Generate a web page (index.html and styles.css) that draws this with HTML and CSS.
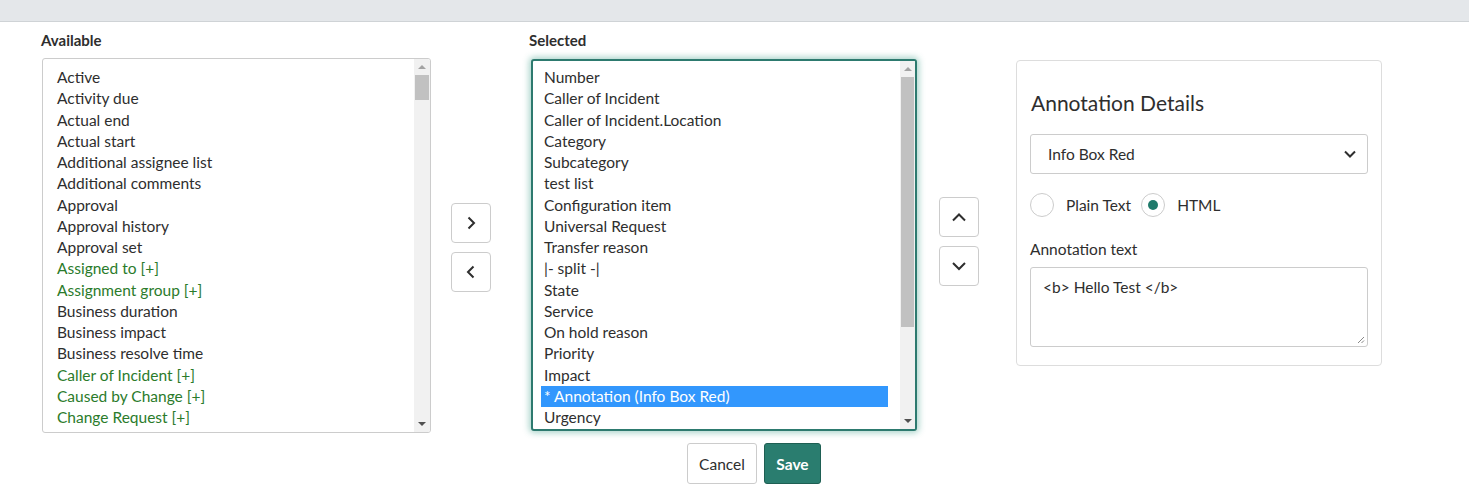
FILE: index.html
```html
<!DOCTYPE html>
<html lang="en">
<head>
    <meta charset="UTF-8">
    <meta name="viewport" content="width=device-width, initial-scale=1.0">
    <title>Edit Columns</title>
    <link rel="stylesheet" href="styles.css">
</head>
<body>
    <div class="topbar"></div>

    <div class="main">
        <div class="col col-available">
            <div class="col-label">Available</div>
            <div class="listbox">
                <div class="list-items">
                    <div class="item">Active</div>
                    <div class="item">Activity due</div>
                    <div class="item">Actual end</div>
                    <div class="item">Actual start</div>
                    <div class="item">Additional assignee list</div>
                    <div class="item">Additional comments</div>
                    <div class="item">Approval</div>
                    <div class="item">Approval history</div>
                    <div class="item">Approval set</div>
                    <div class="item ref">Assigned to [+]</div>
                    <div class="item ref">Assignment group [+]</div>
                    <div class="item">Business duration</div>
                    <div class="item">Business impact</div>
                    <div class="item">Business resolve time</div>
                    <div class="item ref">Caller of Incident [+]</div>
                    <div class="item ref">Caused by Change [+]</div>
                    <div class="item ref">Change Request [+]</div>
                </div>
                <div class="scrollbar">
                    <span class="arrow up"></span>
                    <div class="track"><div class="thumb thumb-small"></div></div>
                    <span class="arrow down"></span>
                </div>
            </div>
        </div>

        <div class="move-buttons move-lr">
            <button class="icon-btn" type="button" title="Add">
                <svg width="14" height="14" viewBox="0 0 14 14"><path d="M4.5 1.5 L10 7 L4.5 12.5" fill="none" stroke="#2e2e2e" stroke-width="2"/></svg>
            </button>
            <button class="icon-btn" type="button" title="Remove">
                <svg width="14" height="14" viewBox="0 0 14 14"><path d="M9.5 1.5 L4 7 L9.5 12.5" fill="none" stroke="#2e2e2e" stroke-width="2"/></svg>
            </button>
        </div>

        <div class="col col-selected">
            <div class="col-label">Selected</div>
            <div class="listbox listbox-focus">
                <div class="list-items">
                    <div class="item">Number</div>
                    <div class="item">Caller of Incident</div>
                    <div class="item">Caller of Incident.Location</div>
                    <div class="item">Category</div>
                    <div class="item">Subcategory</div>
                    <div class="item">test list</div>
                    <div class="item">Configuration item</div>
                    <div class="item">Universal Request</div>
                    <div class="item">Transfer reason</div>
                    <div class="item">|- split -|</div>
                    <div class="item">State</div>
                    <div class="item">Service</div>
                    <div class="item">On hold reason</div>
                    <div class="item">Priority</div>
                    <div class="item">Impact</div>
                    <div class="item selected">* Annotation (Info Box Red)</div>
                    <div class="item">Urgency</div>
                </div>
                <div class="scrollbar">
                    <span class="arrow up"></span>
                    <div class="track"><div class="thumb thumb-large"></div></div>
                    <span class="arrow down"></span>
                </div>
            </div>
            <div class="actions">
                <button class="btn btn-cancel" type="button">Cancel</button>
                <button class="btn btn-primary" type="button">Save</button>
            </div>
        </div>

        <div class="move-buttons move-ud">
            <button class="icon-btn" type="button" title="Move up">
                <svg width="16" height="14" viewBox="0 0 16 14"><path d="M2 10.5 L8 4.5 L14 10.5" fill="none" stroke="#2e2e2e" stroke-width="2"/></svg>
            </button>
            <button class="icon-btn" type="button" title="Move down">
                <svg width="16" height="14" viewBox="0 0 16 14"><path d="M2 4 L8 10 L14 4" fill="none" stroke="#2e2e2e" stroke-width="2"/></svg>
            </button>
        </div>

        <div class="panel">
            <h3 class="panel-title">Annotation Details</h3>
            <div class="select">
                <span>Info Box Red</span>
                <svg width="14" height="10" viewBox="0 0 14 10"><path d="M2 2.5 L7 7.5 L12 2.5" fill="none" stroke="#2e2e2e" stroke-width="2"/></svg>
            </div>
            <div class="radio-row">
                <span class="radio"></span>
                <span class="radio-label">Plain Text</span>
                <span class="radio checked"><span class="dot"></span></span>
                <span class="radio-label">HTML</span>
            </div>
            <div class="field-label">Annotation text</div>
            <div class="textarea">
                &lt;b&gt; Hello Test &lt;/b&gt;
                <svg class="resize" width="8" height="8" viewBox="0 0 8 8"><path d="M7 1 L1 7 M7 4.5 L4.5 7" stroke="#888" stroke-width="1"/></svg>
            </div>
        </div>
    </div>
</body>
</html>
```

FILE: styles.css
```css
body {
    margin: 0;
    font-family: "Lato", "Liberation Sans", sans-serif;
    font-size: 15.5px;
    color: #2e2e2e;
    background-color: #fff;
}

.topbar {
    height: 21px;
    background-color: #e4e7ea;
    border-bottom: 1px solid #cfd3d6;
}

.main {
    display: flex;
    align-items: flex-start;
    padding: 8px 0 0 41px;
}

.col-label {
    font-weight: bold;
    font-size: 15px;
    line-height: 20px;
    height: 20px;
}

/* list boxes */
.listbox {
    display: flex;
    border: 1px solid #cccccc;
    border-radius: 3px;
    background-color: #fff;
    overflow: hidden;
}

.col-available .listbox {
    width: 387px;
    height: 373px;
    margin: 8px 0 0 1px;
}

.col-available .list-items {
    padding: 8px 0 0 11px;
}

.list-items {
    flex: 1;
    overflow: hidden;
}

.item {
    line-height: 21.25px;
    height: 21.25px;
    padding: 0 3px;
    white-space: nowrap;
}

.item.ref {
    color: #2b7b2b;
}

.item.selected {
    background-color: #3297fd;
    color: #fff;
}

.listbox-focus {
    width: 382px;
    height: 368px;
    margin: 9px 0 0 2px;
    border: 2px solid #2d7a6f;
    box-shadow: 0 0 6px 2px rgba(67, 160, 140, 0.45);
}

.listbox-focus .list-items {
    padding: 6px 12px 0 8px;
}

.scrollbar {
    width: 16px;
    display: flex;
    flex-direction: column;
    align-items: center;
    background-color: #f1f1f1;
}

.listbox-focus .scrollbar {
    width: 15px;
}

.arrow {
    width: 0;
    height: 0;
    margin: 6px 0;
    border-left: 4px solid transparent;
    border-right: 4px solid transparent;
}

.arrow.up {
    border-bottom: 4px solid #a3a3a3;
}

.arrow.down {
    border-top: 4px solid #505050;
}

.track {
    flex: 1;
    width: 100%;
}

.thumb {
    background-color: #c1c1c1;
    margin: 0 1px;
}

.thumb-small {
    height: 25px;
}

.thumb-large {
    height: 250px;
}

/* move buttons */
.move-buttons {
    display: flex;
    flex-direction: column;
    gap: 9px;
}

.move-lr {
    margin-left: 20px;
    padding-top: 173px;
}

.move-ud {
    margin-left: 22px;
    padding-top: 167px;
}

.icon-btn {
    width: 40px;
    height: 40px;
    padding: 0;
    display: flex;
    align-items: center;
    justify-content: center;
    background-color: #fff;
    border: 1px solid #cccccc;
    border-radius: 4px;
    cursor: pointer;
}

.col-selected {
    margin-left: 38px;
}

.actions {
    display: flex;
    gap: 7px;
    margin: 12px 0 0 158px;
}

.btn {
    height: 41px;
    padding: 0;
    font-family: inherit;
    font-size: 15.5px;
    color: #2e2e2e;
    background-color: #fff;
    border: 1px solid #cccccc;
    border-radius: 3px;
    cursor: pointer;
}

.btn-cancel {
    width: 70px;
}

.btn-primary {
    width: 57px;
    font-weight: bold;
    color: #fff;
    background-color: #2a7d6f;
    border-color: #1e5f53;
}

/* annotation panel */
.panel {
    width: 338px;
    margin: 30px 0 0 37px;
    padding: 0 13px 18px 13px;
    border: 1px solid #dddddd;
    border-radius: 4px;
}

.panel-title {
    margin: 30px 0 0 1px;
    font-size: 21px;
    font-weight: normal;
    line-height: 24px;
}

.select {
    height: 38px;
    margin-top: 19px;
    padding: 0 10px 0 17px;
    display: flex;
    align-items: center;
    justify-content: space-between;
    border: 1px solid #cccccc;
    border-radius: 3px;
}

.radio-row {
    display: flex;
    align-items: center;
    margin-top: 19px;
    height: 24px;
}

.radio {
    width: 22px;
    height: 22px;
    border: 1px solid #cccccc;
    border-radius: 50%;
    display: flex;
    align-items: center;
    justify-content: center;
}

.radio.checked {
    margin-left: 10px;
}

.dot {
    width: 10px;
    height: 10px;
    border-radius: 50%;
    background-color: #1f7a6b;
}

.radio-label {
    margin-left: 12px;
}

.field-label {
    margin-top: 22px;
    line-height: 20px;
}

.textarea {
    position: relative;
    height: 78px;
    margin-top: 8px;
    padding: 0 12px;
    line-height: 38px;
    border: 1px solid #cccccc;
    border-radius: 3px;
    box-sizing: content-box;
}

.resize {
    position: absolute;
    right: 2px;
    bottom: 2px;
}
```
